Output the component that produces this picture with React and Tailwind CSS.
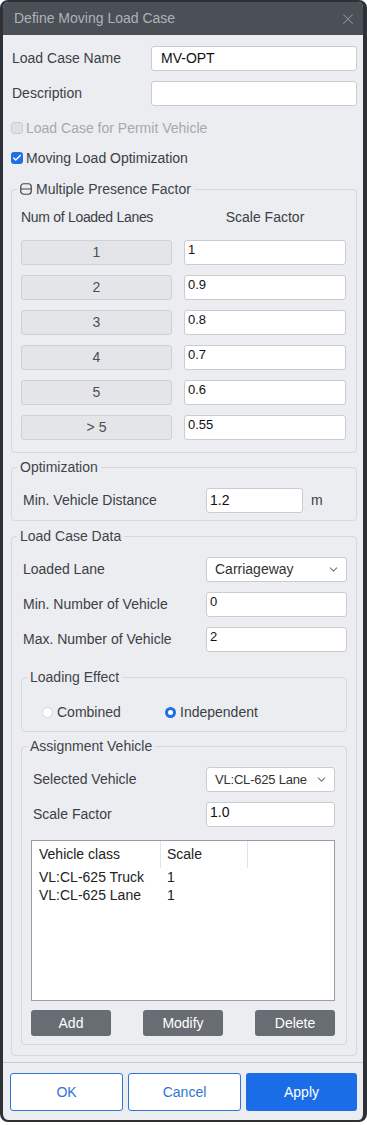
import React from "react";
import { X, ChevronDown, Check } from "lucide-react";

const font = { fontFamily: '"Liberation Sans", Arial, sans-serif' };

function Field({ value, className = "" }) {
  return (
    <div
      className={`h-[25px] bg-white border border-[#c9ccd0] rounded-[3px] pl-[3px] text-[13px] leading-[18px] text-[#111] ${className}`}
    >
      {value}
    </div>
  );
}

function Select({ value, className = "" }) {
  return (
    <div
      className={`h-[25px] bg-white border border-[#c9ccd0] rounded-[3px] pl-[8px] pr-[6px] flex items-center justify-between whitespace-nowrap text-[#333] ${className}`}
    >
      <span>{value}</span>
      <ChevronDown className="w-[13px] h-[13px] shrink-0 text-[#777]" strokeWidth={2} />
    </div>
  );
}

function Group({ title, icon, className = "", children }) {
  return (
    <fieldset className={`border border-[#d5d8dc] rounded-[4px] p-0 ${className}`}>
      <legend className="ml-[5px] px-[3px] text-[14px] leading-[20px] text-[#3f444a] flex items-center gap-[4px]">
        {icon}
        {title}
      </legend>
      {children}
    </fieldset>
  );
}

const lanes = [
  ["1", "1"],
  ["2", "0.9"],
  ["3", "0.8"],
  ["4", "0.7"],
  ["5", "0.6"],
  ["> 5", "0.55"],
];

export default function App() {
  return (
    <div className="w-[367px] h-[1125px] bg-white" style={font}>
      <div className="h-[1122px] flex flex-col rounded-[8px] border-t-[2px] border-l-[3px] border-r-[4px] border-b-[2px] border-[#2e3136] bg-[#ebedf0] overflow-hidden">
        {/* Title bar */}
        <div className="h-[33px] shrink-0 bg-[#4b5057] flex items-center justify-between pl-[11px] pr-[6px]">
          <span className="text-[14px] text-[#aeb3b9]">Define Moving Load Case</span>
          <X className="w-[18px] h-[18px] text-[#8c9198]" strokeWidth={1.4} />
        </div>

        {/* Body */}
        <div className="flex flex-col pl-[8px] pr-[6px] text-[14px] text-[#3b4046]">
          <div className="flex items-center h-[25px] mt-[11px]">
            <span className="flex-1 pl-[1px]">Load Case Name</span>
            <div className="w-[206px] h-[25px] bg-white border border-[#c9ccd0] rounded-[3px] pl-[9px] text-[14px] leading-[23px] text-[#111]">
              MV-OPT
            </div>
          </div>
          <div className="flex items-center h-[25px] mt-[10px]">
            <span className="flex-1 pl-[1px]">Description</span>
            <div className="w-[206px] h-[25px] bg-white border border-[#c9ccd0] rounded-[3px]" />
          </div>

          <div className="flex items-center h-[20px] mt-[12px] gap-[3px] text-[#a5a9af]">
            <span className="w-[12px] h-[12px] rounded-[3px] bg-[#dfe1e4] border border-[#c9ccd0]" />
            Load Case for Permit Vehicle
          </div>
          <div className="flex items-center h-[20px] mt-[10px] gap-[3px]">
            <span className="w-[12px] h-[12px] rounded-[3px] bg-[#1f6fe5] flex items-center justify-center">
              <Check className="w-[10px] h-[10px] text-white" strokeWidth={3.5} />
            </span>
            Moving Load Optimization
          </div>

          {/* Multiple Presence Factor */}
          <Group
            title="Multiple Presence Factor"
            className="mt-[11px]"
            icon={
              <svg width="12" height="12" viewBox="0 0 12 12" className="shrink-0">
                <rect x="0.75" y="0.75" width="10.5" height="10.5" rx="3" fill="none" stroke="#444" strokeWidth="1.2" />
                <line x1="1" y1="6" x2="11" y2="6" stroke="#444" strokeWidth="1.2" />
              </svg>
            }
          >
            <div className="pl-[9px] pr-[10px] pt-[8px] pb-[12px]">
              <div className="flex h-[20px] items-center">
                <span className="w-[151px] tracking-[-0.3px]">Num of Loaded Lanes</span>
                <span className="flex-1 text-center pl-[12px]">Scale Factor</span>
              </div>
              <div className="flex flex-col gap-[10px] mt-[13px]">
                {lanes.map(([n, v]) => (
                  <div key={n} className="flex gap-[12px]">
                    <div className="w-[151px] h-[25px] bg-[#e3e5e8] border border-[#cdd0d4] rounded-[3px] flex items-center justify-center text-[14px] text-[#4a4f55]">
                      {n}
                    </div>
                    <Field value={v} className="flex-1" />
                  </div>
                ))}
              </div>
            </div>
          </Group>

          {/* Optimization */}
          <Group title="Optimization" className="mt-[4px]">
            <div className="flex items-center pl-[11px] pt-[11px] pb-[7px]">
              <span className="w-[183px]">Min. Vehicle Distance</span>
              <Field value="1.2" className="w-[97px] text-[14px] leading-[23px]" />
              <span className="ml-[8px]">m</span>
            </div>
          </Group>

          {/* Load Case Data */}
          <Group title="Load Case Data" className="mt-[5px]">
            <div className="flex flex-col pl-[10px] pr-[9px] pt-[11px] pb-[10px]">
              <div className="flex items-center">
                <span className="flex-1 pl-[1px]">Loaded Lane</span>
                <Select value="Carriageway" className="w-[141px] text-[14px]" />
              </div>
              <div className="flex items-center mt-[10px]">
                <span className="flex-1 pl-[1px]">Min. Number of Vehicle</span>
                <Field value="0" className="w-[141px]" />
              </div>
              <div className="flex items-center mt-[10px]">
                <span className="flex-1 pl-[1px]">Max. Number of Vehicle</span>
                <Field value="2" className="w-[141px]" />
              </div>

              <Group title="Loading Effect" className="mt-[15px] -ml-[1px]">
                <div className="flex items-center h-[20px] mt-[15px] mb-[9px] pl-[20px]">
                  <span className="w-[11px] h-[11px] rounded-full bg-white border border-[#d3d6da]" />
                  <span className="ml-[4px] w-[108px]">Combined</span>
                  <span className="w-[11px] h-[11px] rounded-full bg-white border-[3px] border-[#1f6fe5]" />
                  <span className="ml-[4px]">Independent</span>
                </div>
              </Group>

              <Group title="Assignment Vehicle" className="mt-[4px] -ml-[1px]">
                <div className="flex flex-col pl-[11px] pr-[11px] pt-[11px] pb-[8px]">
                  <div className="flex items-center">
                    <span className="flex-1">Selected Vehicle</span>
                    <Select value="VL:CL-625 Lane" className="w-[129px] pl-[4px] pr-[5px] text-[13px] tracking-[-0.2px]" />
                  </div>
                  <div className="flex items-center mt-[10px]">
                    <span className="flex-1">Scale Factor</span>
                    <Field value="1.0" className="w-[129px] text-[14px]" />
                  </div>

                  <div className="mt-[13px] -ml-[2px] h-[161px] bg-white border border-[#9a9da2] text-[14px] text-[#222]">
                    <div className="flex h-[27px] items-center">
                      <span className="w-[129px] pl-[7px] h-full flex items-center border-r border-[#e2e4e7]">Vehicle class</span>
                      <span className="w-[87px] pl-[6px] h-full flex items-center border-r border-[#e2e4e7]">Scale</span>
                    </div>
                    {[["VL:CL-625 Truck", "1"], ["VL:CL-625 Lane", "1"]].map(([c, s]) => (
                      <div key={c} className="flex h-[18px] items-center">
                        <span className="w-[129px] pl-[7px]">{c}</span>
                        <span className="pl-[6px]">{s}</span>
                      </div>
                    ))}
                  </div>

                  <div className="flex justify-between mt-[9px] -ml-[2px]">
                    {["Add", "Modify", "Delete"].map((b) => (
                      <button
                        key={b}
                        className="w-[80px] h-[26px] rounded-[3px] bg-[#686d74] text-white text-[14px]"
                      >
                        {b}
                      </button>
                    ))}
                  </div>
                </div>
              </Group>
            </div>
          </Group>
        </div>

        {/* Footer */}
        <div className="mt-[6px] border-t border-[#c8cbcf] pl-[7px] pr-[6px] pt-[10px] flex gap-[5px]">
          <button className="flex-1 h-[38px] rounded-[3px] bg-white border border-[#2f74d8] text-[#2f74d8] text-[14px]">OK</button>
          <button className="flex-1 h-[38px] rounded-[3px] bg-white border border-[#2f74d8] text-[#2f74d8] text-[14px]">Cancel</button>
          <button className="flex-1 h-[38px] rounded-[3px] bg-[#1a6de6] text-white text-[14px]">Apply</button>
        </div>
      </div>
    </div>
  );
}
